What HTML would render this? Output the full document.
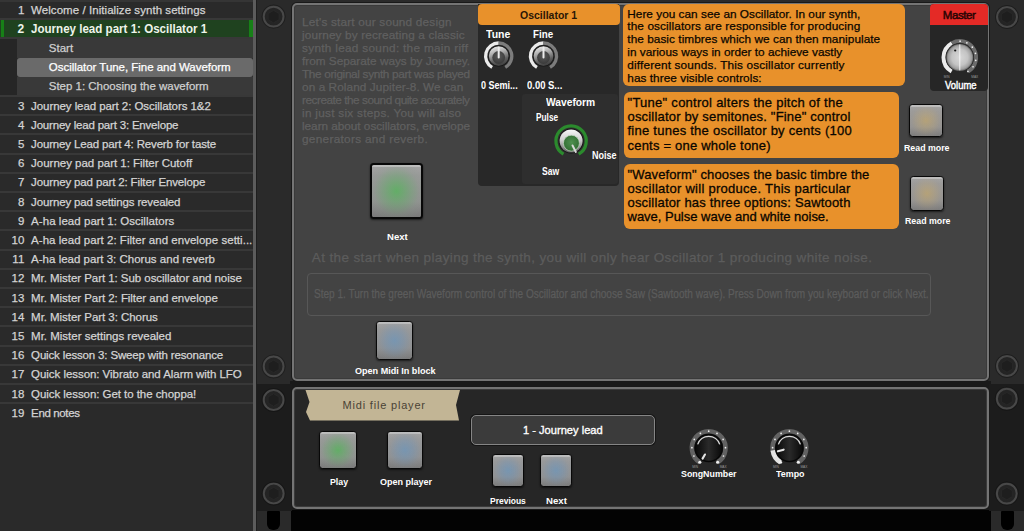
<!DOCTYPE html>
<html><head><meta charset="utf-8">
<style>
*{margin:0;padding:0;box-sizing:border-box}
html,body{width:1024px;height:531px;overflow:hidden;background:#030303;font-family:"Liberation Sans",sans-serif}
.a{position:absolute}
.t{white-space:nowrap;-webkit-text-stroke:0.25px currentColor}
#side{position:absolute;left:0;top:0;width:253px;height:531px;background:#2a2a2a;overflow:hidden}
#scroll{position:absolute;left:252.8px;top:0;width:3.6px;height:531px;background:#5c5c5c;box-shadow:1px 0 0 #1e1e1e}
.screw{position:absolute;width:23px;height:23px;margin:-11.5px 0 0 -11.5px;border-radius:50%;background:radial-gradient(circle closest-side,#1e1e1e 0,#222 40%,#262626 62%,#383838 72%,#4e4e4e 80%,#4a4a4a 88%,rgba(40,40,40,.7) 95%,rgba(30,30,30,0) 100%)}
.panel{position:absolute;border:2px solid #747474;border-radius:5px;box-shadow:0 0 0 1px #191919,inset 0 0 0 1px #3a3a3a}
.btn{position:absolute;border:1.5px solid #080808;border-radius:3.5px;box-shadow:0 1px 2px rgba(0,0,0,.6)}
.btn.gr{background:radial-gradient(ellipse 62% 62% at 50% 50%,rgba(85,180,90,.78) 0,rgba(100,170,105,.5) 40%,rgba(130,155,132,.18) 75%,rgba(140,150,140,0) 100%),linear-gradient(#a4a4a4,#9a9a9a 20%,#929292 70%,#7a7a7a)}
.btn.bl{background:radial-gradient(ellipse 62% 62% at 50% 50%,rgba(100,150,195,.6) 0,rgba(110,148,185,.42) 40%,rgba(130,145,160,.15) 75%,rgba(140,145,150,0) 100%),linear-gradient(#a4a4a4,#9a9a9a 20%,#929292 70%,#7a7a7a)}
.btn.yl{background:radial-gradient(ellipse 62% 62% at 50% 50%,rgba(205,170,95,.55) 0,rgba(190,165,115,.4) 40%,rgba(165,150,130,.15) 75%,rgba(150,145,140,0) 100%),linear-gradient(#a6a6a6,#9c9c9c 20%,#949494 70%,#7c7c7c)}
.btn:before{content:"";position:absolute;left:0;right:0;top:0;height:2px;background:rgba(255,255,255,.28);border-radius:2px 2px 0 0}
.obox{position:absolute;background:#e8912b;border-radius:6px}
</style></head><body>
<div id="side">
<div class="a" style="left:0;top:38.4px;width:17px;height:57.6px;background:#262626"></div>
<div class="a" style="left:0;top:0;width:253px;height:2px;background:#353535"></div>
<div class="a t" style="left:17.89px;top:4px;font-size:11.5px;line-height:13.8px;color:#d4d4d4;">1</div>
<div class="a t" style="left:31.10px;top:4px;font-size:11.5px;line-height:13.8px;letter-spacing:0.057px;color:#d4d4d4;">Welcome / Initialize synth settings</div>
<div class="a" style="left:0;top:19.2px;width:253px;height:19.2px;background:#1f421f"></div>
<div class="a" style="left:1px;top:19.2px;width:3px;height:19.2px;background:#178017"></div>
<div class="a" style="left:249px;top:19.2px;width:4px;height:19.2px;background:#178017"></div>
<div class="a t" style="left:17.61px;top:22px;font-size:12px;line-height:14.4px;color:#eef4ea;font-weight:bold;-webkit-text-stroke:0;">2</div>
<div class="a t" style="left:31.10px;top:22px;font-size:12px;line-height:14.4px;transform:scaleX(0.9642);transform-origin:0 0;color:#eef4ea;font-weight:bold;-webkit-text-stroke:0;">Journey lead part 1: Oscillator 1</div>
<div class="a" style="left:17px;top:38.4px;width:236px;height:19.2px;background:#393939"></div>
<div class="a t" style="left:48.80px;top:42px;font-size:11.5px;line-height:13.8px;color:#cfcfcf;">Start</div>
<div class="a" style="left:17px;top:57.9px;width:236px;height:19.2px;background:#6a6a6a;border-radius:3px"></div>
<div class="a t" style="left:48.80px;top:61px;font-size:11.5px;line-height:13.8px;letter-spacing:-0.034px;color:#fff;">Oscillator Tune, Fine and Waveform</div>
<div class="a" style="left:17px;top:76.8px;width:236px;height:19.2px;background:#393939"></div>
<div class="a t" style="left:48.80px;top:80px;font-size:11.5px;line-height:13.8px;letter-spacing:-0.020px;color:#cfcfcf;">Step 1: Choosing the waveform</div>
<div class="a t" style="left:17.89px;top:100px;font-size:11.5px;line-height:13.8px;color:#d4d4d4;">3</div>
<div class="a t" style="left:31.10px;top:100px;font-size:11.5px;line-height:13.8px;letter-spacing:-0.071px;color:#d4d4d4;">Journey lead part 2: Oscillators 1&amp;2</div>
<div class="a t" style="left:17.89px;top:119px;font-size:11.5px;line-height:13.8px;color:#d4d4d4;">4</div>
<div class="a t" style="left:31.10px;top:119px;font-size:11.5px;line-height:13.8px;letter-spacing:-0.193px;color:#d4d4d4;">Journey lead part 3: Envelope</div>
<div class="a t" style="left:17.89px;top:138px;font-size:11.5px;line-height:13.8px;color:#d4d4d4;">5</div>
<div class="a t" style="left:31.10px;top:138px;font-size:11.5px;line-height:13.8px;letter-spacing:-0.150px;color:#d4d4d4;">Journey Lead part 4: Reverb for taste</div>
<div class="a t" style="left:17.89px;top:157px;font-size:11.5px;line-height:13.8px;color:#d4d4d4;">6</div>
<div class="a t" style="left:31.10px;top:157px;font-size:11.5px;line-height:13.8px;letter-spacing:-0.016px;color:#d4d4d4;">Journey pad part 1: Filter Cutoff</div>
<div class="a t" style="left:17.89px;top:176px;font-size:11.5px;line-height:13.8px;color:#d4d4d4;">7</div>
<div class="a t" style="left:31.10px;top:176px;font-size:11.5px;line-height:13.8px;letter-spacing:-0.138px;color:#d4d4d4;">Journey pad part 2: Filter Envelope</div>
<div class="a t" style="left:17.89px;top:196px;font-size:11.5px;line-height:13.8px;color:#d4d4d4;">8</div>
<div class="a t" style="left:31.10px;top:196px;font-size:11.5px;line-height:13.8px;letter-spacing:-0.144px;color:#d4d4d4;">Journey pad settings revealed</div>
<div class="a t" style="left:17.89px;top:215px;font-size:11.5px;line-height:13.8px;color:#d4d4d4;">9</div>
<div class="a t" style="left:31.10px;top:215px;font-size:11.5px;line-height:13.8px;letter-spacing:0.046px;color:#d4d4d4;">A-ha lead part 1: Oscillators</div>
<div class="a t" style="left:11.50px;top:234px;font-size:11.5px;line-height:13.8px;color:#d4d4d4;">10</div>
<div class="a t" style="left:31.10px;top:234px;font-size:11.5px;line-height:13.8px;letter-spacing:0.029px;color:#d4d4d4;">A-ha lead part 2: Filter and envelope setti...</div>
<div class="a t" style="left:12.35px;top:253px;font-size:11.5px;line-height:13.8px;color:#d4d4d4;">11</div>
<div class="a t" style="left:31.10px;top:253px;font-size:11.5px;line-height:13.8px;letter-spacing:0.010px;color:#d4d4d4;">A-ha lead part 3: Chorus and reverb</div>
<div class="a t" style="left:11.50px;top:272px;font-size:11.5px;line-height:13.8px;color:#d4d4d4;">12</div>
<div class="a t" style="left:31.10px;top:272px;font-size:11.5px;line-height:13.8px;letter-spacing:-0.051px;color:#d4d4d4;">Mr. Mister Part 1: Sub oscillator and noise</div>
<div class="a t" style="left:11.50px;top:292px;font-size:11.5px;line-height:13.8px;color:#d4d4d4;">13</div>
<div class="a t" style="left:31.10px;top:292px;font-size:11.5px;line-height:13.8px;letter-spacing:-0.050px;color:#d4d4d4;">Mr. Mister Part 2: Filter and envelope</div>
<div class="a t" style="left:11.50px;top:311px;font-size:11.5px;line-height:13.8px;color:#d4d4d4;">14</div>
<div class="a t" style="left:31.10px;top:311px;font-size:11.5px;line-height:13.8px;letter-spacing:-0.046px;color:#d4d4d4;">Mr. Mister Part 3: Chorus</div>
<div class="a t" style="left:11.50px;top:330px;font-size:11.5px;line-height:13.8px;color:#d4d4d4;">15</div>
<div class="a t" style="left:31.10px;top:330px;font-size:11.5px;line-height:13.8px;letter-spacing:-0.011px;color:#d4d4d4;">Mr. Mister settings revealed</div>
<div class="a t" style="left:11.50px;top:349px;font-size:11.5px;line-height:13.8px;color:#d4d4d4;">16</div>
<div class="a t" style="left:31.10px;top:349px;font-size:11.5px;line-height:13.8px;letter-spacing:-0.155px;color:#d4d4d4;">Quick lesson 3: Sweep with resonance</div>
<div class="a t" style="left:11.50px;top:368px;font-size:11.5px;line-height:13.8px;color:#d4d4d4;">17</div>
<div class="a t" style="left:31.10px;top:368px;font-size:11.5px;line-height:13.8px;letter-spacing:-0.050px;color:#d4d4d4;">Quick lesson: Vibrato and Alarm with LFO</div>
<div class="a t" style="left:11.50px;top:388px;font-size:11.5px;line-height:13.8px;color:#d4d4d4;">18</div>
<div class="a t" style="left:31.10px;top:388px;font-size:11.5px;line-height:13.8px;letter-spacing:-0.054px;color:#d4d4d4;">Quick lesson: Get to the choppa!</div>
<div class="a t" style="left:11.50px;top:407px;font-size:11.5px;line-height:13.8px;color:#d4d4d4;">19</div>
<div class="a t" style="left:31.10px;top:407px;font-size:11.5px;line-height:13.8px;letter-spacing:-0.362px;color:#d4d4d4;">End notes</div>
<div class="a" style="left:0px;top:18.2px;width:253px;height:2px;background:#383838"></div>
<div class="a" style="left:0px;top:37.4px;width:253px;height:2px;background:#383838"></div>
<div class="a" style="left:0px;top:95.0px;width:253px;height:2px;background:#383838"></div>
<div class="a" style="left:0px;top:114.2px;width:253px;height:2px;background:#383838"></div>
<div class="a" style="left:0px;top:133.4px;width:253px;height:2px;background:#383838"></div>
<div class="a" style="left:0px;top:152.6px;width:253px;height:2px;background:#383838"></div>
<div class="a" style="left:0px;top:171.8px;width:253px;height:2px;background:#383838"></div>
<div class="a" style="left:0px;top:191.0px;width:253px;height:2px;background:#383838"></div>
<div class="a" style="left:0px;top:210.2px;width:253px;height:2px;background:#383838"></div>
<div class="a" style="left:0px;top:229.4px;width:253px;height:2px;background:#383838"></div>
<div class="a" style="left:0px;top:248.6px;width:253px;height:2px;background:#383838"></div>
<div class="a" style="left:0px;top:267.8px;width:253px;height:2px;background:#383838"></div>
<div class="a" style="left:0px;top:287.0px;width:253px;height:2px;background:#383838"></div>
<div class="a" style="left:0px;top:306.2px;width:253px;height:2px;background:#383838"></div>
<div class="a" style="left:0px;top:325.4px;width:253px;height:2px;background:#383838"></div>
<div class="a" style="left:0px;top:344.6px;width:253px;height:2px;background:#383838"></div>
<div class="a" style="left:0px;top:363.8px;width:253px;height:2px;background:#383838"></div>
<div class="a" style="left:0px;top:383.0px;width:253px;height:2px;background:#383838"></div>
<div class="a" style="left:0px;top:402.2px;width:253px;height:2px;background:#383838"></div>
</div>
<div id="scroll"></div>
<!-- rails -->
<div class="a" style="left:257px;top:0;width:767px;height:384px;background:#2a2a2a"></div>
<div class="a" style="left:257px;top:384px;width:767px;height:126px;background:#1c1c1c"></div>
<div class="a" style="left:257px;top:0;width:35px;height:384px;background:#2a2a2a"></div>
<div class="a" style="left:989px;top:0;width:35px;height:384px;background:#2a2a2a"></div>
<div class="a" style="left:257px;top:0;width:767px;height:3px;background:#2a2a2a"></div>
<div class="a" style="left:290px;top:381px;width:701px;height:6px;background:#1a1a1a"></div>
<div class="a" style="left:257px;top:384px;width:35px;height:127px;background:#1c1c1c"></div>
<div class="a" style="left:989px;top:384px;width:35px;height:127px;background:#1c1c1c"></div>
<div class="a" style="left:257px;top:510.8px;width:34px;height:21px;background:#2a2a2a"></div>
<div class="a" style="left:267.3px;top:510.8px;width:13px;height:19px;background:#000;border-radius:1px 1px 6px 6px"></div>
<div class="a" style="left:990.7px;top:510.8px;width:34px;height:21px;background:#2a2a2a"></div>
<div class="a" style="left:1001px;top:510.8px;width:12.5px;height:19px;background:#000;border-radius:1px 1px 6px 6px"></div>

<svg class="a" style="left:0;top:0" width="1024" height="531">
<circle cx="273.6" cy="16.6" r="12" fill="rgba(0,0,0,.18)"/>
<circle cx="273.6" cy="16.6" r="10" fill="#242424" stroke="#484848" stroke-width="2.2"/>
<circle cx="273.6" cy="16.6" r="11.4" fill="none" stroke="rgba(20,20,20,.5)" stroke-width=".8"/>
<polygon points="278.97,19.70 273.60,22.80 268.23,19.70 268.23,13.50 273.60,10.40 278.97,13.50" fill="#1e1e1e" stroke="#2c2c2c" stroke-width=".6"/>
<circle cx="273.6" cy="366.4" r="12" fill="rgba(0,0,0,.18)"/>
<circle cx="273.6" cy="366.4" r="10" fill="#242424" stroke="#484848" stroke-width="2.2"/>
<circle cx="273.6" cy="366.4" r="11.4" fill="none" stroke="rgba(20,20,20,.5)" stroke-width=".8"/>
<polygon points="278.97,369.50 273.60,372.60 268.23,369.50 268.23,363.30 273.60,360.20 278.97,363.30" fill="#1e1e1e" stroke="#2c2c2c" stroke-width=".6"/>
<circle cx="273.6" cy="400" r="12" fill="rgba(0,0,0,.18)"/>
<circle cx="273.6" cy="400" r="10" fill="#242424" stroke="#484848" stroke-width="2.2"/>
<circle cx="273.6" cy="400" r="11.4" fill="none" stroke="rgba(20,20,20,.5)" stroke-width=".8"/>
<polygon points="278.97,403.10 273.60,406.20 268.23,403.10 268.23,396.90 273.60,393.80 278.97,396.90" fill="#1e1e1e" stroke="#2c2c2c" stroke-width=".6"/>
<circle cx="273.7" cy="493.5" r="12" fill="rgba(0,0,0,.18)"/>
<circle cx="273.7" cy="493.5" r="10" fill="#242424" stroke="#484848" stroke-width="2.2"/>
<circle cx="273.7" cy="493.5" r="11.4" fill="none" stroke="rgba(20,20,20,.5)" stroke-width=".8"/>
<polygon points="279.07,496.60 273.70,499.70 268.33,496.60 268.33,490.40 273.70,487.30 279.07,490.40" fill="#1e1e1e" stroke="#2c2c2c" stroke-width=".6"/>
<circle cx="1007" cy="17" r="12" fill="rgba(0,0,0,.18)"/>
<circle cx="1007" cy="17" r="10" fill="#242424" stroke="#484848" stroke-width="2.2"/>
<circle cx="1007" cy="17" r="11.4" fill="none" stroke="rgba(20,20,20,.5)" stroke-width=".8"/>
<polygon points="1012.37,20.10 1007.00,23.20 1001.63,20.10 1001.63,13.90 1007.00,10.80 1012.37,13.90" fill="#1e1e1e" stroke="#2c2c2c" stroke-width=".6"/>
<circle cx="1007" cy="366" r="12" fill="rgba(0,0,0,.18)"/>
<circle cx="1007" cy="366" r="10" fill="#242424" stroke="#484848" stroke-width="2.2"/>
<circle cx="1007" cy="366" r="11.4" fill="none" stroke="rgba(20,20,20,.5)" stroke-width=".8"/>
<polygon points="1012.37,369.10 1007.00,372.20 1001.63,369.10 1001.63,362.90 1007.00,359.80 1012.37,362.90" fill="#1e1e1e" stroke="#2c2c2c" stroke-width=".6"/>
<circle cx="1006.8" cy="398.7" r="12" fill="rgba(0,0,0,.18)"/>
<circle cx="1006.8" cy="398.7" r="10" fill="#242424" stroke="#484848" stroke-width="2.2"/>
<circle cx="1006.8" cy="398.7" r="11.4" fill="none" stroke="rgba(20,20,20,.5)" stroke-width=".8"/>
<polygon points="1012.17,401.80 1006.80,404.90 1001.43,401.80 1001.43,395.60 1006.80,392.50 1012.17,395.60" fill="#1e1e1e" stroke="#2c2c2c" stroke-width=".6"/>
<circle cx="1006.8" cy="493.6" r="12" fill="rgba(0,0,0,.18)"/>
<circle cx="1006.8" cy="493.6" r="10" fill="#242424" stroke="#484848" stroke-width="2.2"/>
<circle cx="1006.8" cy="493.6" r="11.4" fill="none" stroke="rgba(20,20,20,.5)" stroke-width=".8"/>
<polygon points="1012.17,496.70 1006.80,499.80 1001.43,496.70 1001.43,490.50 1006.80,487.40 1012.17,490.50" fill="#1e1e1e" stroke="#2c2c2c" stroke-width=".6"/>
</svg>
<!-- main panel -->
<div class="panel" style="left:292px;top:3px;width:697px;height:378px;background:#434343"></div>
<div class="a t" style="left:302.00px;top:15px;font-size:11.8px;line-height:14.16px;letter-spacing:0.183px;color:#606060;">Let's start our sound design</div>
<div class="a t" style="left:302.00px;top:28px;font-size:11.8px;line-height:14.16px;letter-spacing:0.130px;color:#606060;">journey by recreating a classic</div>
<div class="a t" style="left:302.00px;top:41px;font-size:11.8px;line-height:14.16px;letter-spacing:0.294px;color:#606060;">synth lead sound: the main riff</div>
<div class="a t" style="left:302.00px;top:54px;font-size:11.8px;line-height:14.16px;letter-spacing:-0.010px;color:#606060;">from Separate ways by Journey.</div>
<div class="a t" style="left:302.00px;top:67px;font-size:11.8px;line-height:14.16px;letter-spacing:-0.334px;color:#606060;">The original synth part was played</div>
<div class="a t" style="left:302.00px;top:80px;font-size:11.8px;line-height:14.16px;letter-spacing:0.077px;color:#606060;">on a Roland Jupiter-8. We can</div>
<div class="a t" style="left:302.00px;top:93px;font-size:11.8px;line-height:14.16px;letter-spacing:-0.479px;color:#606060;">recreate the sound quite accurately</div>
<div class="a t" style="left:302.00px;top:106px;font-size:11.8px;line-height:14.16px;letter-spacing:0.270px;color:#606060;">in just six steps. You will also</div>
<div class="a t" style="left:302.00px;top:119px;font-size:11.8px;line-height:14.16px;letter-spacing:-0.038px;color:#606060;">learn about oscillators, envelope</div>
<div class="a t" style="left:302.00px;top:132px;font-size:11.8px;line-height:14.16px;letter-spacing:0.302px;color:#606060;">generators and reverb.</div>

<!-- oscillator module -->
<div class="a" style="left:478.3px;top:3.5px;width:141px;height:182px;background:#282828;border-radius:0 0 4px 4px"></div>
<div class="a" style="left:478.3px;top:3.6px;width:141.5px;height:21.9px;background:#e8912b;border-radius:4px"></div>
<div class="a" style="left:521.5px;top:93.5px;width:96px;height:90px;background:#2e2e2e;border-radius:3px"></div>
<div class="a t" style="left:519.95px;top:9px;font-size:11.3px;line-height:13.56px;transform:scaleX(0.9282);transform-origin:0 0;color:#2a1606;font-weight:bold;-webkit-text-stroke:0;">Oscillator 1</div>
<div class="a t" style="left:485.90px;top:28px;font-size:11px;line-height:13.2px;transform:scaleX(0.9553);transform-origin:0 0;color:#fff;font-weight:bold;-webkit-text-stroke:0;">Tune</div>
<div class="a t" style="left:532.70px;top:28px;font-size:11px;line-height:13.2px;transform:scaleX(0.8878);transform-origin:0 0;color:#fff;font-weight:bold;-webkit-text-stroke:0;">Fine</div>
<div class="a t" style="left:481.00px;top:80px;font-size:10px;line-height:12.0px;transform:scaleX(0.9030);transform-origin:0 0;color:#fff;font-weight:bold;-webkit-text-stroke:0;">0 Semi...</div>
<div class="a t" style="left:526.70px;top:80px;font-size:10px;line-height:12.0px;transform:scaleX(0.9468);transform-origin:0 0;color:#fff;font-weight:bold;-webkit-text-stroke:0;">0.00 S...</div>
<div class="a t" style="left:545.70px;top:96px;font-size:11px;line-height:13.2px;transform:scaleX(0.9324);transform-origin:0 0;color:#fff;font-weight:bold;-webkit-text-stroke:0;">Waveform</div>
<div class="a t" style="left:535.70px;top:112px;font-size:10px;line-height:12.0px;transform:scaleX(0.8280);transform-origin:0 0;color:#fff;font-weight:bold;-webkit-text-stroke:0;">Pulse</div>
<div class="a t" style="left:592.10px;top:150px;font-size:10px;line-height:12.0px;transform:scaleX(0.9011);transform-origin:0 0;color:#fff;font-weight:bold;-webkit-text-stroke:0;">Noise</div>
<div class="a t" style="left:542.40px;top:166px;font-size:10px;line-height:12.0px;transform:scaleX(0.8550);transform-origin:0 0;color:#fff;font-weight:bold;-webkit-text-stroke:0;">Saw</div>
<svg class="a" style="left:0;top:0" width="1024" height="531"><defs>
<linearGradient id="kb" x1=".3" y1="0" x2=".6" y2="1"><stop offset="0" stop-color="#e8e8e8"/><stop offset=".35" stop-color="#adadad"/><stop offset=".72" stop-color="#5e5e5e"/><stop offset="1" stop-color="#3c3c3c"/></linearGradient>
<radialGradient id="kc" cx=".5" cy=".4" r=".6"><stop offset="0" stop-color="#5a5a5a"/><stop offset="1" stop-color="#3a3a3a"/></radialGradient>
<linearGradient id="wb" x1="0" y1="0" x2="0" y2="1"><stop offset="0" stop-color="#f6f6f6"/><stop offset=".45" stop-color="#d0d0d0"/><stop offset=".8" stop-color="#8a8a8a"/><stop offset="1" stop-color="#555"/></linearGradient>
<radialGradient id="wc" cx=".5" cy=".45" r=".6"><stop offset="0" stop-color="#4f9050"/><stop offset="1" stop-color="#2f6a30"/></radialGradient>
<radialGradient id="sil" cx=".5" cy=".5" r=".5"><stop offset="0" stop-color="#d8d8d8"/><stop offset=".6" stop-color="#c4c4c4"/><stop offset=".88" stop-color="#a0a0a0"/><stop offset="1" stop-color="#6a6a6a"/></radialGradient>
<linearGradient id="blk" x1="0" y1="0" x2="1" y2="0"><stop offset="0" stop-color="#0a0a0a"/><stop offset=".5" stop-color="#2a2a2a"/><stop offset="1" stop-color="#0a0a0a"/></linearGradient>
</defs>
<path d="M492.15,67.44 A13.1,13.1 0 0 1 498.70,43.00" fill="none" stroke="#ebebeb" stroke-width="3.3"/>
<path d="M498.70,43.00 A13.1,13.1 0 0 1 505.25,67.44" fill="none" stroke="#7c7c7c" stroke-width="3.3"/>
<circle cx="498.7" cy="56.1" r="10.5" fill="#141414"/>
<circle cx="498.7" cy="56.1" r="9.9" fill="url(#kb)"/>
<circle cx="498.7" cy="57.5" r="6.4" fill="url(#kc)"/>
<line x1="498.7" y1="57.6" x2="498.7" y2="47.8" stroke="#ececec" stroke-width="2" stroke-linecap="round"/>
<path d="M536.95,67.44 A13.1,13.1 0 0 1 543.50,43.00" fill="none" stroke="#ebebeb" stroke-width="3.3"/>
<path d="M543.50,43.00 A13.1,13.1 0 0 1 550.05,67.44" fill="none" stroke="#7c7c7c" stroke-width="3.3"/>
<circle cx="543.5" cy="56.1" r="10.5" fill="#141414"/>
<circle cx="543.5" cy="56.1" r="9.9" fill="url(#kb)"/>
<circle cx="543.5" cy="57.5" r="6.4" fill="url(#kc)"/>
<line x1="543.5" y1="57.6" x2="543.5" y2="47.8" stroke="#ececec" stroke-width="2" stroke-linecap="round"/>
<path d="M563.50,154.16 A15.2,15.2 0 1 1 578.70,154.16" fill="none" stroke="#2b8a2d" stroke-width="3.2"/>
<circle cx="571.1" cy="141" r="12.4" fill="#141414"/>
<circle cx="571.1" cy="141" r="11.5" fill="url(#wb)"/>
<circle cx="571.4" cy="143.2" r="8" fill="url(#wc)" stroke="#c8dcc8" stroke-width=".7"/>
<line x1="572.53" y1="145.43" x2="575.85" y2="151.93" stroke="#d8d8d8" stroke-width="2" stroke-linecap="round"/>
</svg>

<!-- orange boxes -->
<div class="obox" style="left:623.4px;top:3.8px;width:281.2px;height:82.6px"></div>
<div class="obox" style="left:623.6px;top:92px;width:275.6px;height:65.8px"></div>
<div class="obox" style="left:623.6px;top:163.6px;width:275.6px;height:65.6px"></div>
<div class="a t" style="left:627.30px;top:7px;font-size:11.8px;line-height:14.16px;letter-spacing:0.020px;color:#0a0600;-webkit-text-stroke:0.25px #0a0600">Here you can see an Oscillator. In our synth,</div>
<div class="a t" style="left:627.30px;top:19px;font-size:11.8px;line-height:14.16px;letter-spacing:0.109px;color:#0a0600;-webkit-text-stroke:0.25px #0a0600">the oscillators are responsible for producing</div>
<div class="a t" style="left:627.30px;top:32px;font-size:11.8px;line-height:14.16px;letter-spacing:0.053px;color:#0a0600;-webkit-text-stroke:0.25px #0a0600">the basic timbres which we can then manipulate</div>
<div class="a t" style="left:627.30px;top:45px;font-size:11.8px;line-height:14.16px;letter-spacing:0.012px;color:#0a0600;-webkit-text-stroke:0.25px #0a0600">in various ways in order to achieve vastly</div>
<div class="a t" style="left:627.30px;top:58px;font-size:11.8px;line-height:14.16px;letter-spacing:0.155px;color:#0a0600;-webkit-text-stroke:0.25px #0a0600">different sounds. This oscillator currently</div>
<div class="a t" style="left:627.30px;top:71px;font-size:11.8px;line-height:14.16px;letter-spacing:0.046px;color:#0a0600;-webkit-text-stroke:0.25px #0a0600">has three visible controls:</div>
<div class="a t" style="left:627.50px;top:95px;font-size:13px;line-height:15.6px;letter-spacing:0.267px;color:#0a0600;-webkit-text-stroke:0.3px #0a0600">"Tune" control alters the pitch of the</div>
<div class="a t" style="left:627.50px;top:109px;font-size:13px;line-height:15.6px;letter-spacing:0.185px;color:#0a0600;-webkit-text-stroke:0.3px #0a0600">oscillator by semitones. "Fine" control</div>
<div class="a t" style="left:627.50px;top:123px;font-size:13px;line-height:15.6px;letter-spacing:0.252px;color:#0a0600;-webkit-text-stroke:0.3px #0a0600">fine tunes the oscillator by cents (100</div>
<div class="a t" style="left:627.50px;top:138px;font-size:13px;line-height:15.6px;letter-spacing:0.213px;color:#0a0600;-webkit-text-stroke:0.3px #0a0600">cents = one whole tone)</div>
<div class="a t" style="left:627.50px;top:167px;font-size:13px;line-height:15.6px;letter-spacing:0.124px;color:#0a0600;-webkit-text-stroke:0.3px #0a0600">"Waveform" chooses the basic timbre the</div>
<div class="a t" style="left:627.50px;top:181px;font-size:13px;line-height:15.6px;letter-spacing:0.275px;color:#0a0600;-webkit-text-stroke:0.3px #0a0600">oscillator will produce. This particular</div>
<div class="a t" style="left:627.50px;top:195px;font-size:13px;line-height:15.6px;letter-spacing:0.184px;color:#0a0600;-webkit-text-stroke:0.3px #0a0600">oscillator has three options: Sawtooth</div>
<div class="a t" style="left:627.50px;top:209px;font-size:13px;line-height:15.6px;letter-spacing:-0.013px;color:#0a0600;-webkit-text-stroke:0.3px #0a0600">wave, Pulse wave and white noise.</div>

<!-- master -->
<div class="a" style="left:930.3px;top:3.8px;width:57.7px;height:87.5px;background:#262626;border-radius:4px"></div>
<div class="a" style="left:930.3px;top:3.8px;width:57.7px;height:21.6px;background:#e42a26;border-radius:4px 4px 0 0"></div>
<div class="a t" style="left:942.85px;top:9px;font-size:11.5px;line-height:13.8px;letter-spacing:-0.451px;color:#2a0404;-webkit-text-stroke:0.5px #2a0404">Master</div>
<svg class="a" style="left:0;top:0" width="1024" height="531">
<path d="M951.70,71.43 A16.2,16.2 0 0 1 951.95,43.23" fill="none" stroke="#ececec" stroke-width="4.2"/>
<path d="M951.95,43.23 A16.2,16.2 0 0 1 967.90,71.43" fill="none" stroke="#6c6c6c" stroke-width="4.2"/>
<circle cx="960.08" cy="41.20" r="0.85" fill="#f0f0f0"/>
<circle cx="966.86" cy="42.82" r="0.85" fill="#f0f0f0"/>
<circle cx="972.33" cy="47.13" r="0.85" fill="#f0f0f0"/>
<circle cx="975.48" cy="53.34" r="0.85" fill="#f0f0f0"/>
<circle cx="975.74" cy="60.31" r="0.85" fill="#f0f0f0"/>
<circle cx="973.04" cy="66.73" r="0.85" fill="#f0f0f0"/>
<circle cx="967.90" cy="71.43" r="0.85" fill="#f0f0f0"/>
<circle cx="959.8" cy="57.4" r="14.3" fill="#2a2a2a"/>
<circle cx="959.8" cy="57.4" r="13.4" fill="url(#sil)"/>
<rect x="959.3" y="44.4" width="1" height="26" fill="#fafafa" opacity=".9"/>
<circle cx="955.1999999999999" cy="50.5" r="1.1" fill="#111"/>
<text x="943.8" y="77.9" font-size="3.2" fill="#9a9a9a" font-family="Liberation Sans">MIN</text>
<text x="971.3" y="77.9" font-size="3.2" fill="#9a9a9a" font-family="Liberation Sans">MAX</text>
</svg>
<div class="a t" style="left:944.80px;top:79px;font-size:11px;line-height:13.2px;transform:scaleX(0.8601);transform-origin:0 0;color:#fff;-webkit-text-stroke:0.45px #fff">Volume</div>

<div class="btn yl" style="left:909.4px;top:103.8px;width:33.6px;height:33.4px"></div>
<div class="btn yl" style="left:910.4px;top:176.4px;width:33.2px;height:34.3px"></div>
<div class="btn gr" style="left:370px;top:162.8px;width:52.8px;height:55.9px;border-width:2px"></div>
<div class="a" style="left:307.1px;top:272.9px;width:624.2px;height:42.8px;border:1.5px solid #575757;border-radius:4px"></div>
<div class="btn bl" style="left:376.4px;top:321.3px;width:37px;height:39px"></div>

<!-- lower panel -->
<div class="panel" style="left:292px;top:387px;width:697px;height:121.5px;background:#262626"></div>
<svg class="a" style="left:0;top:0" width="1024" height="531">
<polygon points="305.5,390 460,390 456,405 459,420.5 310,420.5 306,412 309.5,402" fill="#c2b595"/>
</svg>
<div class="btn gr" style="left:319.4px;top:430.9px;width:37.3px;height:38.6px"></div>
<div class="btn bl" style="left:386.8px;top:430.9px;width:36.7px;height:38.6px"></div>
<div class="a" style="left:471px;top:414.7px;width:184.1px;height:30.1px;background:#3b3b3b;border:1.6px solid #858585;border-radius:5px;box-shadow:0 0 0 1px #151515"></div>
<div class="btn bl" style="left:492.2px;top:453.7px;width:31.5px;height:33.5px"></div>
<div class="btn bl" style="left:540px;top:453.7px;width:31.7px;height:33.5px"></div>
<svg class="a" style="left:0;top:0" width="1024" height="531">
<path d="M699.80,462.25 A16.8,16.8 0 1 1 717.60,462.25" fill="none" stroke="#626262" stroke-width="4.6"/>
<circle cx="699.80" cy="462.25" r="0.85" fill="#f0f0f0"/>
<circle cx="693.92" cy="455.99" r="0.85" fill="#f0f0f0"/>
<circle cx="691.90" cy="447.65" r="0.85" fill="#f0f0f0"/>
<circle cx="694.27" cy="439.40" r="0.85" fill="#f0f0f0"/>
<circle cx="700.40" cy="433.39" r="0.85" fill="#f0f0f0"/>
<circle cx="708.70" cy="431.20" r="0.85" fill="#f0f0f0"/>
<circle cx="717.00" cy="433.39" r="0.85" fill="#f0f0f0"/>
<circle cx="723.13" cy="439.40" r="0.85" fill="#f0f0f0"/>
<circle cx="725.50" cy="447.65" r="0.85" fill="#f0f0f0"/>
<circle cx="723.48" cy="455.99" r="0.85" fill="#f0f0f0"/>
<circle cx="717.60" cy="462.25" r="0.85" fill="#f0f0f0"/>
<circle cx="699.80" cy="462.25" r="1.6" fill="#eee"/>
<circle cx="717.60" cy="462.25" r="1.6" fill="#eee"/>
<circle cx="708.7" cy="448" r="14.3" fill="#070707"/>
<circle cx="708.7" cy="448" r="12.8" fill="url(#blk)"/>
<path d="M697.67,444.42 A11.6,11.6 0 0 1 719.73,444.42" fill="none" stroke="#d8d8d8" stroke-width="1.3"/>
<line x1="704.95" y1="454.50" x2="702.55" y2="458.65" stroke="#e4e4e4" stroke-width="2.1" stroke-linecap="round"/>
<text x="692.2" y="467.6" font-size="3.2" fill="#9a9a9a" font-family="Liberation Sans">MIN</text>
<text x="719.7" y="467.6" font-size="3.2" fill="#9a9a9a" font-family="Liberation Sans">MAX</text>
<path d="M780.50,462.25 A16.8,16.8 0 1 1 798.30,462.25" fill="none" stroke="#626262" stroke-width="4.6"/>
<path d="M780.50,462.25 A16.8,16.8 0 0 1 772.76,450.34" fill="none" stroke="#e2e2e2" stroke-width="4.6"/>
<circle cx="780.50" cy="462.25" r="0.85" fill="#f0f0f0"/>
<circle cx="774.62" cy="455.99" r="0.85" fill="#f0f0f0"/>
<circle cx="772.60" cy="447.65" r="0.85" fill="#f0f0f0"/>
<circle cx="774.97" cy="439.40" r="0.85" fill="#f0f0f0"/>
<circle cx="781.10" cy="433.39" r="0.85" fill="#f0f0f0"/>
<circle cx="789.40" cy="431.20" r="0.85" fill="#f0f0f0"/>
<circle cx="797.70" cy="433.39" r="0.85" fill="#f0f0f0"/>
<circle cx="803.83" cy="439.40" r="0.85" fill="#f0f0f0"/>
<circle cx="806.20" cy="447.65" r="0.85" fill="#f0f0f0"/>
<circle cx="804.18" cy="455.99" r="0.85" fill="#f0f0f0"/>
<circle cx="798.30" cy="462.25" r="0.85" fill="#f0f0f0"/>
<circle cx="780.50" cy="462.25" r="1.6" fill="#eee"/>
<circle cx="798.30" cy="462.25" r="1.6" fill="#eee"/>
<circle cx="789.4" cy="448" r="14.3" fill="#070707"/>
<circle cx="789.4" cy="448" r="12.8" fill="url(#blk)"/>
<path d="M778.37,444.42 A11.6,11.6 0 0 1 800.43,444.42" fill="none" stroke="#d8d8d8" stroke-width="1.3"/>
<line x1="783.63" y1="449.65" x2="777.86" y2="451.31" stroke="#e4e4e4" stroke-width="2.1" stroke-linecap="round"/>
<text x="772.9" y="467.6" font-size="3.2" fill="#9a9a9a" font-family="Liberation Sans">MIN</text>
<text x="800.4" y="467.6" font-size="3.2" fill="#9a9a9a" font-family="Liberation Sans">MAX</text>
</svg>
<div class="a t" style="left:903.90px;top:142px;font-size:9.5px;line-height:11.4px;transform:scaleX(0.9271);transform-origin:0 0;color:#fff;font-weight:bold;-webkit-text-stroke:0;">Read more</div>
<div class="a t" style="left:904.70px;top:215px;font-size:9.5px;line-height:11.4px;transform:scaleX(0.9271);transform-origin:0 0;color:#fff;font-weight:bold;-webkit-text-stroke:0;">Read more</div>
<div class="a t" style="left:387.00px;top:231px;font-size:9.5px;line-height:11.4px;transform:scaleX(1.0088);transform-origin:0 0;color:#fff;font-weight:bold;-webkit-text-stroke:0;">Next</div>
<div class="a t" style="left:311.80px;top:250px;font-size:13.5px;line-height:16.2px;letter-spacing:0.371px;color:#5c5c5c;">At the start when playing the synth, you will only hear Oscillator 1 producing white noise.</div>
<div class="a t" style="left:313.80px;top:287px;font-size:12px;line-height:14.4px;transform:scaleX(0.8375);transform-origin:0 0;color:#5c5c5c;">Step 1. Turn the green Waveform control of the Oscillator and choose Saw (Sawtooth wave). Press Down from you keyboard or click Next.</div>
<div class="a t" style="left:354.80px;top:365px;font-size:9.5px;line-height:11.4px;transform:scaleX(0.9537);transform-origin:0 0;color:#fff;font-weight:bold;-webkit-text-stroke:0;">Open Midi In block</div>
<div class="a t" style="left:342.50px;top:399px;font-size:11px;line-height:13.2px;letter-spacing:0.812px;color:#4a4336;-webkit-text-stroke:0">Midi file player</div>
<div class="a t" style="left:329.55px;top:476px;font-size:9.5px;line-height:11.4px;transform:scaleX(0.9222);transform-origin:0 0;color:#fff;font-weight:bold;-webkit-text-stroke:0;">Play</div>
<div class="a t" style="left:379.50px;top:476px;font-size:9.5px;line-height:11.4px;transform:scaleX(0.9494);transform-origin:0 0;color:#fff;font-weight:bold;-webkit-text-stroke:0;">Open player</div>
<div class="a t" style="left:523.40px;top:424px;font-size:11.5px;line-height:13.8px;transform:scaleX(0.9660);transform-origin:0 0;color:#fff;-webkit-text-stroke:0.35px #fff">1 - Journey lead</div>
<div class="a t" style="left:490.35px;top:495px;font-size:9.5px;line-height:11.4px;transform:scaleX(0.8921);transform-origin:0 0;color:#fff;font-weight:bold;-webkit-text-stroke:0;">Previous</div>
<div class="a t" style="left:545.75px;top:495px;font-size:9.5px;line-height:11.4px;transform:scaleX(1.0138);transform-origin:0 0;color:#fff;font-weight:bold;-webkit-text-stroke:0;">Next</div>
<div class="a t" style="left:681.20px;top:468px;font-size:9.5px;line-height:11.4px;transform:scaleX(0.9311);transform-origin:0 0;color:#fff;font-weight:bold;-webkit-text-stroke:0;">SongNumber</div>
<div class="a t" style="left:775.70px;top:468px;font-size:9.5px;line-height:11.4px;transform:scaleX(0.9375);transform-origin:0 0;color:#fff;font-weight:bold;-webkit-text-stroke:0;">Tempo</div>
</body></html>
